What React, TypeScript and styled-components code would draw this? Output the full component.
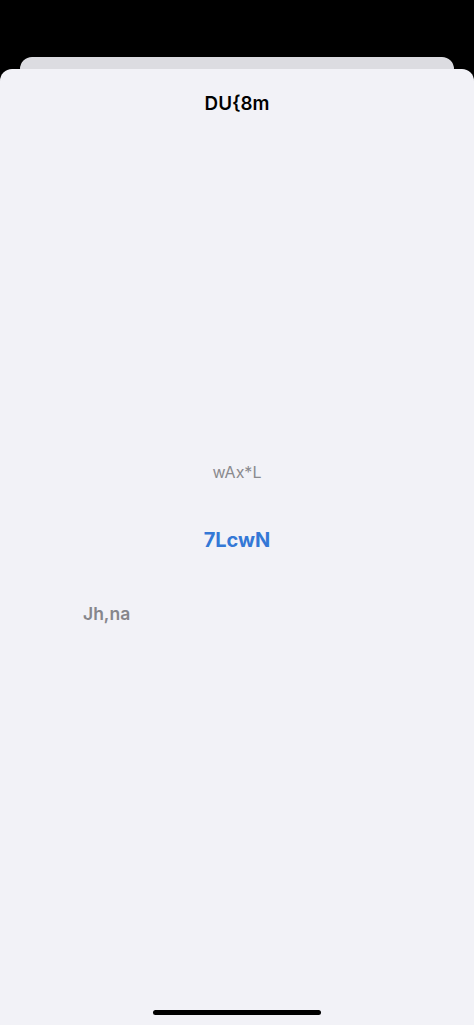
import React from 'react';
import styled, { createGlobalStyle } from 'styled-components';

const GlobalStyle = createGlobalStyle`
    html, body {
        margin: 0;
        padding: 0;
        background: #000;
    }
    body {
        font-family: Inter, "Liberation Sans", Arial, sans-serif;
    }
`;

const Screen = styled.div`
    width: 474px;
    height: 1025px;
    background: #000;
    display: flex;
    flex-direction: column;
    overflow: hidden;
`;

const BackCard = styled.div`
    margin: 57px 20px 0;
    height: 12px;
    flex-shrink: 0;
    background: #dcdce1;
    border-radius: 12px 12px 0 0;
`;

const Sheet = styled.div`
    flex: 1;
    background: #f2f2f7;
    border-radius: 12px 12px 0 0;
    display: flex;
    flex-direction: column;
    position: relative;
`;

const Title = styled.h1`
    margin: 24px 0 0;
    text-align: center;
    font-size: 18.8px;
    font-weight: 600;
    color: #000;
    line-height: 22px;
`;

const Center = styled.div`
    margin-top: 347px;
    display: flex;
    flex-direction: column;
    align-items: center;
`;

const Caption = styled.div`
    font-size: 16px;
    font-weight: 400;
    color: #8a8a8e;
    line-height: 20px;
`;

const Action = styled.button`
    margin-top: 46px;
    background: none;
    border: none;
    padding: 0;
    font-family: inherit;
    font-size: 20px;
    font-weight: 700;
    color: #3478d6;
    line-height: 24px;
`;

const Side = styled.div`
    margin: 51px 0 0 83px;
    font-size: 17.5px;
    font-weight: 600;
    color: #86868b;
    line-height: 22px;
`;

const HomeBar = styled.div`
    position: absolute;
    left: 153px;
    bottom: 10px;
    width: 168px;
    height: 5px;
    border-radius: 3px;
    background: #000;
`;

export default function App() {
    return (
        <>
            <GlobalStyle />
            <Screen>
                <BackCard />
                <Sheet>
                    <Title>DU{'{'}8m</Title>
                    <Center>
                        <Caption>wAx*L</Caption>
                        <Action>7LcwN</Action>
                    </Center>
                    <Side>Jh,na</Side>
                    <HomeBar />
                </Sheet>
            </Screen>
        </>
    );
}
